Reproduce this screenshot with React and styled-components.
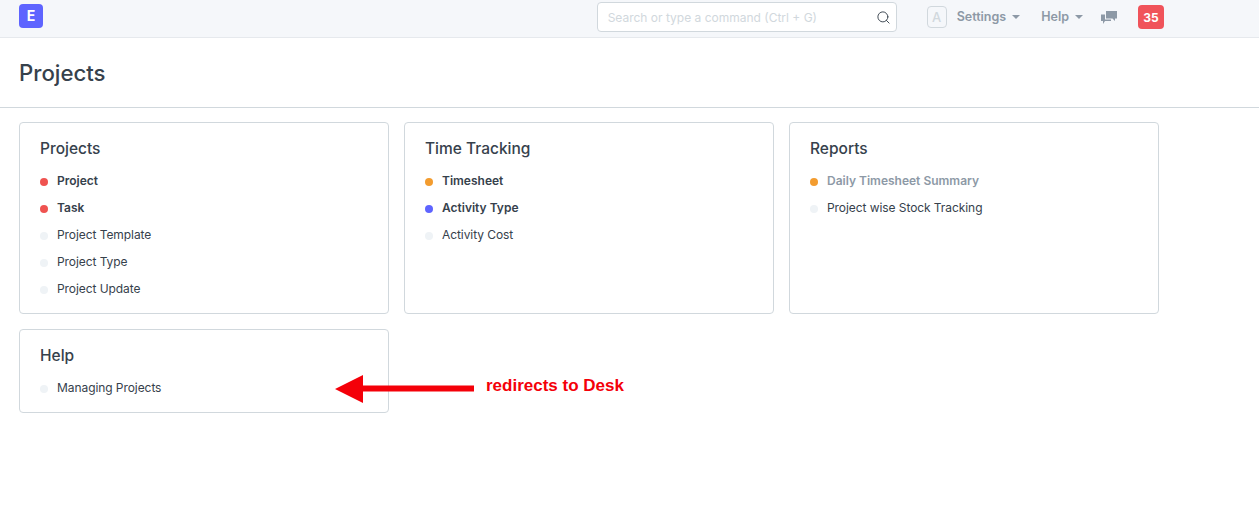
import React from 'react';
import styled, { createGlobalStyle } from 'styled-components';
import { Search } from 'lucide-react';

const GlobalStyle = createGlobalStyle`
  html, body {
    margin: 0;
    padding: 0;
    background: #fff;
    font-family: Inter, "Liberation Sans", sans-serif;
    color: #36414c;
  }
`;

const Page = styled.div`
  position: relative;
  width: 1259px;
  height: 509px;
  overflow: hidden;
`;

const Navbar = styled.header`
  display: flex;
  align-items: center;
  height: 37px;
  padding: 0 95px 0 19px;
  background: #f5f7fa;
  border-bottom: 1px solid #e6e9ed;
`;

const Logo = styled.div`
  display: flex;
  align-items: center;
  justify-content: center;
  width: 24px;
  height: 24px;
  margin-top: -6px;
  border-radius: 4px;
  background: #5e64ff;
  color: #fff;
  font-size: 14px;
  font-weight: 700;
`;

const NavRight = styled.div`
  display: flex;
  align-items: center;
  margin-left: auto;
`;

const SearchBox = styled.div`
  display: flex;
  align-items: center;
  justify-content: space-between;
  box-sizing: border-box;
  width: 300px;
  height: 30px;
  margin-top: -3px;
  padding: 0 5px 0 10px;
  background: #fff;
  border: 1px solid #d1d8dd;
  border-radius: 4px;
  color: #d1d8dd;
  font-size: 12px;
`;

const Avatar = styled.div`
  display: flex;
  align-items: center;
  justify-content: center;
  box-sizing: border-box;
  width: 20px;
  height: 22px;
  margin: -3px 0 0 30px;
  border: 1px solid #d1d8dd;
  border-radius: 4px;
  color: #d1d8dd;
  font-size: 13px;
  font-weight: 500;
`;

const NavLink = styled.div`
  display: flex;
  align-items: center;
  gap: 6px;
  margin: -4px 0 0 ${(p) => p.$left}px;
  color: #8d99a6;
  font-size: 12.5px;
  font-weight: 600;
`;

const Caret = styled.span`
  width: 0;
  height: 0;
  margin-top: 1px;
  border-left: 4px solid transparent;
  border-right: 4px solid transparent;
  border-top: 4px solid #8d99a6;
`;

const ChatIcon = styled.svg`
  width: 16px;
  height: 15px;
  margin: -3px 0 0 18px;
  fill: #8d99a6;
`;

const Badge = styled.div`
  display: flex;
  align-items: center;
  justify-content: center;
  width: 26px;
  height: 24px;
  margin: -3px 0 0 21px;
  border-radius: 4px;
  background: #f0535a;
  color: #fff;
  font-size: 12px;
  font-weight: 700;
`;

const PageHead = styled.div`
  display: flex;
  align-items: center;
  box-sizing: border-box;
  height: 70px;
  padding: 0 19px;
  border-bottom: 1px solid #d1d8dd;
`;

const PageTitle = styled.h1`
  margin: 0;
  font-size: 22.2px;
  font-weight: 500;
  color: #36414c;
`;

const Grid = styled.main`
  display: grid;
  grid-template-columns: repeat(3, 370px);
  gap: 15px;
  padding: 14px 19px;
`;

const Card = styled.section`
  box-sizing: border-box;
  height: ${(p) => p.$height}px;
  padding: 16px 20px 0;
  border: 1px solid #d1d8dd;
  border-radius: 4px;
`;

const CardTitle = styled.h2`
  margin: 0 0 8px;
  font-size: 15.5px;
  line-height: 20px;
  font-weight: 500;
  color: #36414c;
`;

const Row = styled.div`
  display: flex;
  align-items: center;
  gap: 9px;
  height: 27px;
  font-size: 12px;
  letter-spacing: ${(p) => (p.$bold ? 0 : -0.07)}px;
  font-weight: ${(p) => (p.$bold ? 600 : 400)};
  color: ${(p) => (p.$muted ? '#8d99a6' : '#36414c')};
`;

const Dot = styled.span`
  flex: none;
  width: 8px;
  height: 8px;
  margin-top: 2px;
  border-radius: 50%;
  background: ${(p) => p.$color};
`;

const Arrow = styled.svg`
  position: absolute;
  left: 334px;
  top: 374px;
  width: 142px;
  height: 30px;
`;

const Note = styled.div`
  position: absolute;
  left: 486px;
  top: 376px;
  color: #f40009;
  font-family: "Liberation Sans", Arial, sans-serif;
  font-size: 17px;
  line-height: 20px;
  font-weight: 700;
`;

const RED = '#ef5350';
const ORANGE = '#f39c2f';
const BLUE = '#5e64ff';
const EMPTY = '#eff3f6';

const cards = [
  {
    title: 'Projects',
    height: 192,
    items: [
      { label: 'Project', color: RED, bold: true },
      { label: 'Task', color: RED, bold: true },
      { label: 'Project Template', color: EMPTY },
      { label: 'Project Type', color: EMPTY },
      { label: 'Project Update', color: EMPTY },
    ],
  },
  {
    title: 'Time Tracking',
    height: 192,
    items: [
      { label: 'Timesheet', color: ORANGE, bold: true },
      { label: 'Activity Type', color: BLUE, bold: true },
      { label: 'Activity Cost', color: EMPTY },
    ],
  },
  {
    title: 'Reports',
    height: 192,
    items: [
      { label: 'Daily Timesheet Summary', color: ORANGE, bold: true, muted: true },
      { label: 'Project wise Stock Tracking', color: EMPTY },
    ],
  },
  {
    title: 'Help',
    height: 84,
    items: [{ label: 'Managing Projects', color: EMPTY }],
  },
];

const App = () => (
  <Page>
    <GlobalStyle />
    <Navbar>
      <Logo>E</Logo>
      <NavRight>
        <SearchBox>
          <span>Search or type a command (Ctrl + G)</span>
          <Search size={15} color="#36414c" strokeWidth={1.5} />
        </SearchBox>
        <Avatar>A</Avatar>
        <NavLink $left={10}>Settings <Caret /></NavLink>
        <NavLink $left={21}>Help <Caret /></NavLink>
        <ChatIcon viewBox="0 0 16 15">
          <path d="M5 1h11v7.5h-2V11l-2.5-2.5H5z" />
          <path d="M0 4.5h4V9.5h6V11H4l-2 3v-3H0z" />
        </ChatIcon>
        <Badge>35</Badge>
      </NavRight>
    </Navbar>
    <PageHead>
      <PageTitle>Projects</PageTitle>
    </PageHead>
    <Grid>
      {cards.map((card) => (
        <Card key={card.title} $height={card.height}>
          <CardTitle>{card.title}</CardTitle>
          {card.items.map((item) => (
            <Row key={item.label} $bold={item.bold} $muted={item.muted}>
              <Dot $color={item.color} />
              {item.label}
            </Row>
          ))}
        </Card>
      ))}
    </Grid>
    <Arrow viewBox="0 0 142 30">
      <path d="M1 15 L29 1 V11.5 H140 V17.5 H29 V29 Z" fill="#f40009" />
    </Arrow>
    <Note>redirects to Desk</Note>
  </Page>
);

export default App;
